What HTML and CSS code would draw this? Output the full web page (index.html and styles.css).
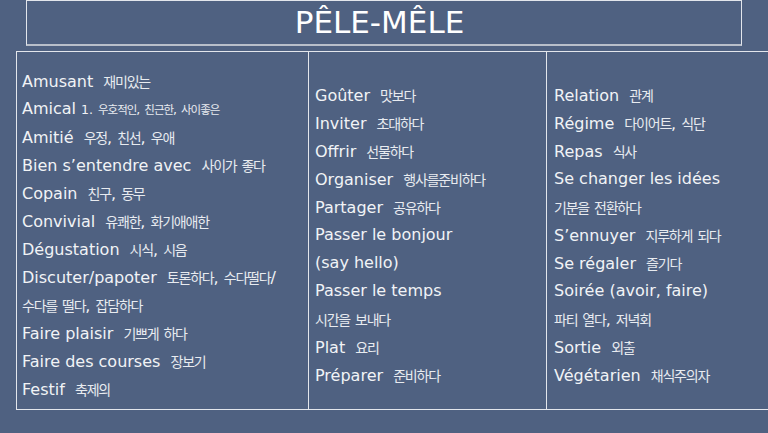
FILE: index.html
```html
<!DOCTYPE html>
<html lang="fr">
<head>
<meta charset="utf-8">
<title>Pêle-mêle</title>
<link rel="stylesheet" href="styles.css">
</head>
<body>
<div class="page">
  <header class="title-box"><h1 class="title">PÊLE-MÊLE</h1></header>
  <section class="table">
    <div class="cell">
      <div class="line">Amusant <span class="ko">재미있는</span></div>
      <div class="line">Amical <span class="small">1. <span class="ko ko-s">우호적인</span>, <span class="ko ko-s">친근한</span>, <span class="ko ko-s">사이좋은</span></span></div>
      <div class="line">Amitié <span class="ko">우정</span>, <span class="ko k0">친선</span>, <span class="ko k0">우애</span></div>
      <div class="line">Bien s’entendre avec <span class="ko">사이가 좋다</span></div>
      <div class="line">Copain <span class="ko">친구</span>, <span class="ko k0">동무</span></div>
      <div class="line">Convivial <span class="ko">유쾌한</span>, <span class="ko k0">화기애애한</span></div>
      <div class="line">Dégustation <span class="ko">시식</span>, <span class="ko k0">시음</span></div>
      <div class="line">Discuter/papoter <span class="ko">토론하다</span>, <span class="ko k0">수다떨다</span>/</div>
      <div class="line"><span class="ko k0">수다를 떨다</span>, <span class="ko k0">잡담하다</span></div>
      <div class="line">Faire plaisir <span class="ko">기쁘게 하다</span></div>
      <div class="line">Faire des courses <span class="ko">장보기</span></div>
      <div class="line">Festif <span class="ko">축제의</span></div>
    </div>
    <div class="cell">
      <div class="line">Goûter <span class="ko">맛보다</span></div>
      <div class="line">Inviter <span class="ko">초대하다</span></div>
      <div class="line">Offrir <span class="ko">선물하다</span></div>
      <div class="line">Organiser <span class="ko">행사를준비하다</span></div>
      <div class="line">Partager <span class="ko">공유하다</span></div>
      <div class="line">Passer le bonjour</div>
      <div class="line">(say hello)</div>
      <div class="line">Passer le temps</div>
      <div class="line"><span class="ko k0">시간을 보내다</span></div>
      <div class="line">Plat <span class="ko">요리</span></div>
      <div class="line">Préparer <span class="ko">준비하다</span></div>
    </div>
    <div class="cell">
      <div class="line">Relation <span class="ko">관계</span></div>
      <div class="line">Régime <span class="ko">다이어트</span>, <span class="ko k0">식단</span></div>
      <div class="line">Repas <span class="ko">식사</span></div>
      <div class="line">Se changer les idées</div>
      <div class="line"><span class="ko k0">기분을 전환하다</span></div>
      <div class="line">S’ennuyer <span class="ko">지루하게 되다</span></div>
      <div class="line">Se régaler <span class="ko">즐기다</span></div>
      <div class="line">Soirée (avoir, faire)</div>
      <div class="line"><span class="ko k0">파티 열다</span>, <span class="ko k0">저녁회</span></div>
      <div class="line">Sortie <span class="ko">외출</span></div>
      <div class="line">Végétarien <span class="ko">채식주의자</span></div>
    </div>
  </section>
</div>
</body>
</html>
```

FILE: styles.css
```css
html, body {
  margin: 0;
  padding: 0;
  width: 768px;
  height: 433px;
  overflow: hidden;
  background: #4f6181;
}

.page {
  display: flex;
  flex-direction: column;
  font-family: "DejaVu Sans", "Noto Sans CJK KR", sans-serif;
  color: #f1f3f6;
}

.title-box {
  margin-left: 26px;
  height: 43px;
  border: 1px solid #e3e6ec;
  border-bottom: 2px solid #b9bfca;
  display: flex;
  align-items: center;
  justify-content: center;
  padding-right: 9px;
  box-sizing: content-box;
  width: 705px;
}

.title {
  margin: 0;
  font-weight: normal;
  font-size: 31px;
  line-height: 1;
  color: #ffffff;
}

.table {
  margin-top: 5px;
  margin-left: 16px;
  height: 357px;
  display: grid;
  grid-template-columns: 291px 238px 240px;
  border: 1px solid #e3e6ec;
  width: max-content;
}

.cell {
  display: flex;
  flex-direction: column;
  justify-content: center;
  padding: 8px 0 0 5px;
  border-left: 1px solid #e3e6ec;
}

.cell:first-child {
  border-left: none;
}

.cell:nth-child(2) { padding-left: 6px; }
.cell:nth-child(3) { padding-left: 7px; }

.line {
  font-size: 16px;
  line-height: 28px;
  height: 28px;
  white-space: nowrap;
}

.ko {
  font-family: "Noto Sans CJK KR", sans-serif;
  font-size: 14px;
  letter-spacing: -1.2px;
  word-spacing: 3px;
  color: #e8ebf0;
  margin-left: 5px;
}

.k0 {
  margin-left: 0;
}

.small {
  font-size: 12.5px;
}

.ko-s {
  font-size: 11.5px;
  margin-left: 0;
  letter-spacing: -1px;
}

.small > .ko-s:first-child {
  margin-left: 1px;
}
```
